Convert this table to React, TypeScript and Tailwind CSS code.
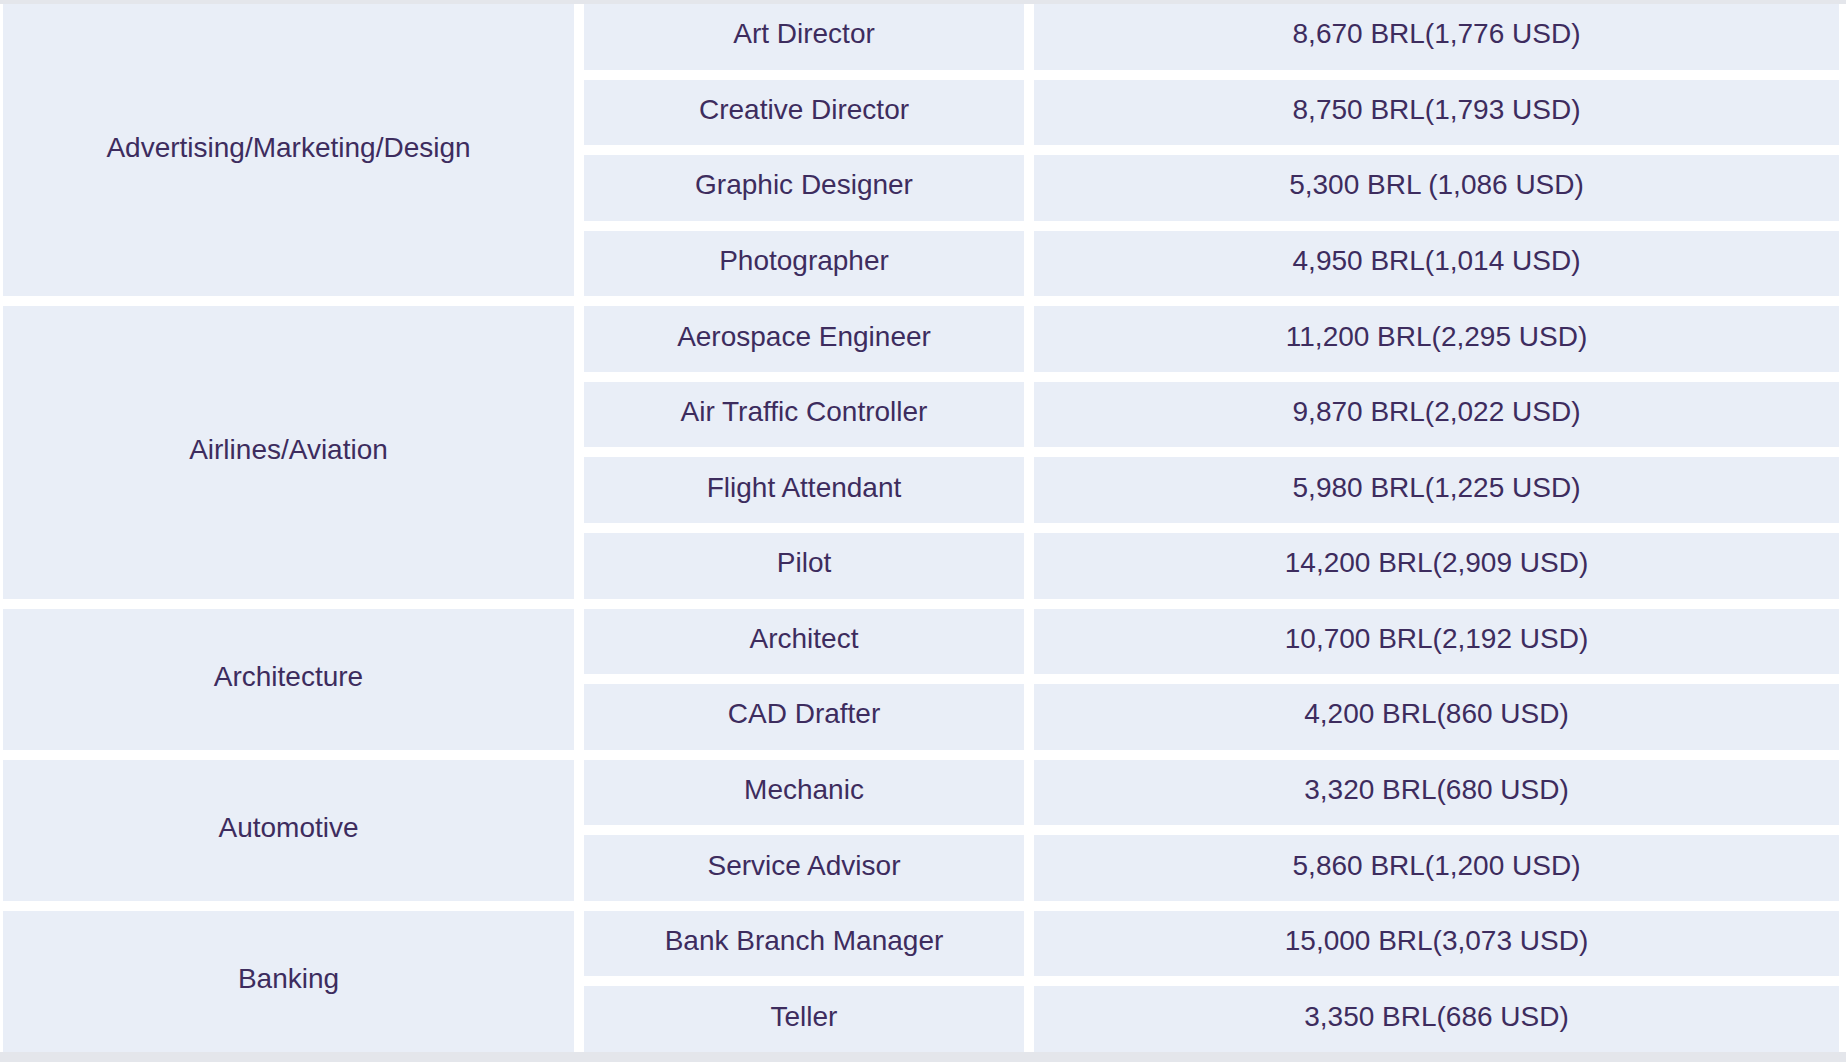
const groups: { industry: string; jobs: [string, string][] }[] = [
  {
    industry: 'Advertising/Marketing/Design',
    jobs: [
      ['Art Director', '8,670 BRL(1,776 USD)'],
      ['Creative Director', '8,750 BRL(1,793 USD)'],
      ['Graphic Designer', '5,300 BRL (1,086 USD)'],
      ['Photographer', '4,950 BRL(1,014 USD)'],
    ],
  },
  {
    industry: 'Airlines/Aviation',
    jobs: [
      ['Aerospace Engineer', '11,200 BRL(2,295 USD)'],
      ['Air Traffic Controller', '9,870 BRL(2,022 USD)'],
      ['Flight Attendant', '5,980 BRL(1,225 USD)'],
      ['Pilot', '14,200 BRL(2,909 USD)'],
    ],
  },
  {
    industry: 'Architecture',
    jobs: [
      ['Architect', '10,700 BRL(2,192 USD)'],
      ['CAD Drafter', '4,200 BRL(860 USD)'],
    ],
  },
  {
    industry: 'Automotive',
    jobs: [
      ['Mechanic', '3,320 BRL(680 USD)'],
      ['Service Advisor', '5,860 BRL(1,200 USD)'],
    ],
  },
  {
    industry: 'Banking',
    jobs: [
      ['Bank Branch Manager', '15,000 BRL(3,073 USD)'],
      ['Teller', '3,350 BRL(686 USD)'],
    ],
  },
];

const cell = 'flex items-center justify-center bg-[#e9eef7] text-center pb-[5px]';

export default function App() {
  let row = 1;

  return (
    <div
      className="w-[1846px] h-[1062px] flex flex-col bg-white text-[28px] text-[#3d2c5e] overflow-hidden"
      style={{ fontFamily: '"Liberation Sans", Arial, sans-serif' }}
    >
      <div className="h-[4px] shrink-0 bg-[#e4e6eb]" />

      <div className="h-[1048px] shrink-0 pl-[3px] pr-[7px]">
        <div className="grid h-full grid-cols-[571px_440px_805px] grid-rows-[repeat(14,minmax(0,1fr))] gap-x-[10px] gap-y-[10px]">
          {groups.map((g) => {
            const start = row;
            row += g.jobs.length;
            return [
              <div
                key={g.industry}
                className={cell}
                style={{ gridColumn: 1, gridRow: `${start} / span ${g.jobs.length}` }}
              >
                {g.industry}
              </div>,
              ...g.jobs.flatMap(([job, pay], i) => [
                <div key={job} className={cell} style={{ gridColumn: 2, gridRow: start + i }}>
                  {job}
                </div>,
                <div key={job + '-pay'} className={cell} style={{ gridColumn: 3, gridRow: start + i }}>
                  {pay}
                </div>,
              ]),
            ];
          })}
        </div>
      </div>

      <div className="h-[10px] shrink-0 bg-[#e4e6eb]" />
    </div>
  );
}
